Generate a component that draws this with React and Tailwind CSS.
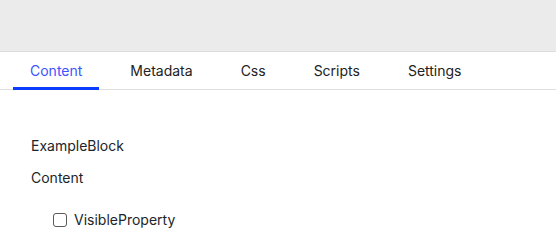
import React, { useState } from 'react';

const TABS = ['Content', 'Metadata', 'Css', 'Scripts', 'Settings'];

export default function App() {
  const [active, setActive] = useState('Content');
  const [visible, setVisible] = useState(false);

  return (
    <div
      className="w-[556px] h-[247px] bg-white text-[#212529] overflow-hidden"
      style={{ fontFamily: 'Inter, "Liberation Sans", sans-serif' }}
    >
      <div className="h-[52px] bg-[#ebebeb] border-b border-[#dcdcdc]" />

      <div className="flex gap-[14px] pl-[13px] border-b border-[#dedede]">
        {TABS.map((tab) => (
          <button
            key={tab}
            type="button"
            onClick={() => setActive(tab)}
            className={
              tab === active
                ? 'px-[17px] h-[38px] pt-[2px] text-[14px] text-[#3d52ff] border-b-[3px] border-[#0a3cff] -mb-px'
                : 'px-[17px] h-[38px] pt-[2px] text-[14px] text-[#222] border-b-[3px] border-transparent -mb-px'
            }
          >
            {tab}
          </button>
        ))}
      </div>

      <div className="pl-[31px] pt-[46px] text-[14px]">
        <p className="m-0 leading-[20px]">ExampleBlock</p>
        <p className="m-0 mt-[12px] leading-[20px]">Content</p>
        <label className="flex items-center gap-[7px] ml-[22px] mt-[22px] cursor-pointer">
          <input
            type="checkbox"
            checked={visible}
            onChange={(e) => setVisible(e.target.checked)}
            className="appearance-none w-[14px] h-[14px] rounded-[3px] border-[1.5px] border-[#5a5a5a] bg-white m-0"
          />
          <span className="leading-[20px]">VisibleProperty</span>
        </label>
      </div>
    </div>
  );
}
